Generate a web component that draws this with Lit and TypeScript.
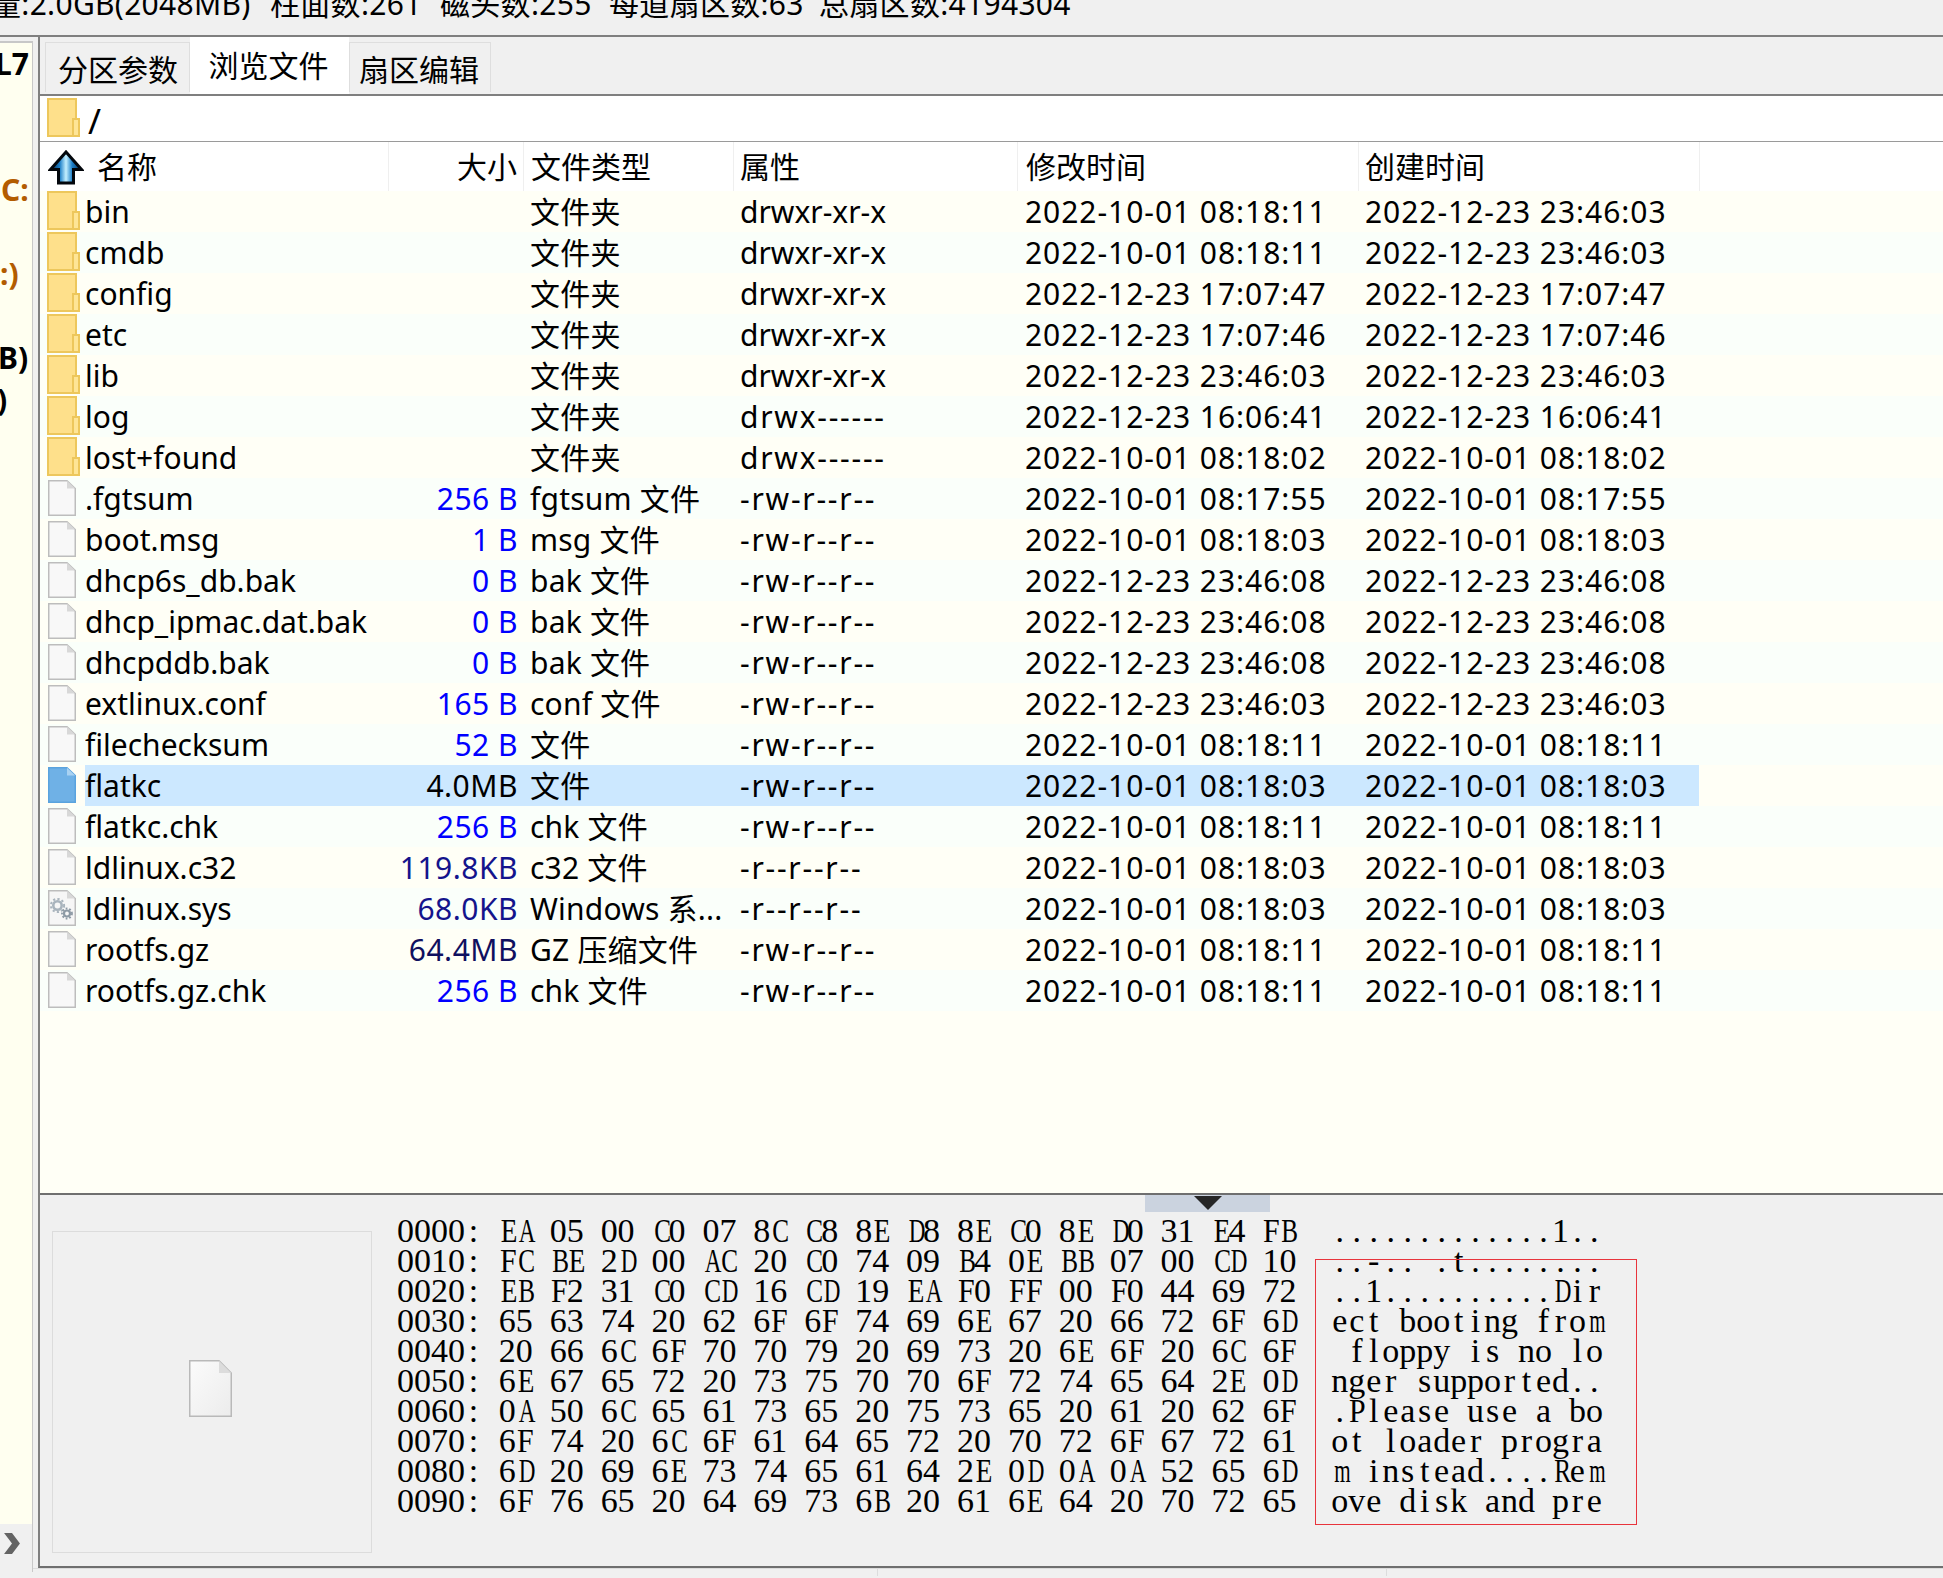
import { LitElement, html, css, svg } from "lit";
import { customElement } from "lit/decorators.js";

type Row = [string, string, string, string, string, string];
const ROWS: Row[] = [
  ["bin", "", "文件夹", "drwxr-xr-x", "2022-10-01 08:18:11", "2022-12-23 23:46:03"],
  ["cmdb", "", "文件夹", "drwxr-xr-x", "2022-10-01 08:18:11", "2022-12-23 23:46:03"],
  ["config", "", "文件夹", "drwxr-xr-x", "2022-12-23 17:07:47", "2022-12-23 17:07:47"],
  ["etc", "", "文件夹", "drwxr-xr-x", "2022-12-23 17:07:46", "2022-12-23 17:07:46"],
  ["lib", "", "文件夹", "drwxr-xr-x", "2022-12-23 23:46:03", "2022-12-23 23:46:03"],
  ["log", "", "文件夹", "drwx------", "2022-12-23 16:06:41", "2022-12-23 16:06:41"],
  ["lost+found", "", "文件夹", "drwx------", "2022-10-01 08:18:02", "2022-10-01 08:18:02"],
  [".fgtsum", "256 B", "fgtsum 文件", "-rw-r--r--", "2022-10-01 08:17:55", "2022-10-01 08:17:55"],
  ["boot.msg", "1 B", "msg 文件", "-rw-r--r--", "2022-10-01 08:18:03", "2022-10-01 08:18:03"],
  ["dhcp6s_db.bak", "0 B", "bak 文件", "-rw-r--r--", "2022-12-23 23:46:08", "2022-12-23 23:46:08"],
  ["dhcp_ipmac.dat.bak", "0 B", "bak 文件", "-rw-r--r--", "2022-12-23 23:46:08", "2022-12-23 23:46:08"],
  ["dhcpddb.bak", "0 B", "bak 文件", "-rw-r--r--", "2022-12-23 23:46:08", "2022-12-23 23:46:08"],
  ["extlinux.conf", "165 B", "conf 文件", "-rw-r--r--", "2022-12-23 23:46:03", "2022-12-23 23:46:03"],
  ["filechecksum", "52 B", "文件", "-rw-r--r--", "2022-10-01 08:18:11", "2022-10-01 08:18:11"],
  ["flatkc", "4.0MB", "文件", "-rw-r--r--", "2022-10-01 08:18:03", "2022-10-01 08:18:03"],
  ["flatkc.chk", "256 B", "chk 文件", "-rw-r--r--", "2022-10-01 08:18:11", "2022-10-01 08:18:11"],
  ["ldlinux.c32", "119.8KB", "c32 文件", "-r--r--r--", "2022-10-01 08:18:03", "2022-10-01 08:18:03"],
  ["ldlinux.sys", "68.0KB", "Windows 系...", "-r--r--r--", "2022-10-01 08:18:03", "2022-10-01 08:18:03"],
  ["rootfs.gz", "64.4MB", "GZ 压缩文件", "-rw-r--r--", "2022-10-01 08:18:11", "2022-10-01 08:18:11"],
  ["rootfs.gz.chk", "256 B", "chk 文件", "-rw-r--r--", "2022-10-01 08:18:11", "2022-10-01 08:18:11"],
];

const HEX: [string, string][] = [
  ["0000: EA 05 00 C0 07 8C C8 8E D8 8E C0 8E D0 31 E4 FB", ".............1.."],
  ["0010: FC BE 2D 00 AC 20 C0 74 09 B4 0E BB 07 00 CD 10", "..-.. .t........"],
  ["0020: EB F2 31 C0 CD 16 CD 19 EA F0 FF 00 F0 44 69 72", "..1..........Dir"],
  ["0030: 65 63 74 20 62 6F 6F 74 69 6E 67 20 66 72 6F 6D", "ect booting from"],
  ["0040: 20 66 6C 6F 70 70 79 20 69 73 20 6E 6F 20 6C 6F", " floppy is no lo"],
  ["0050: 6E 67 65 72 20 73 75 70 70 6F 72 74 65 64 2E 0D", "nger supported.."],
  ["0060: 0A 50 6C 65 61 73 65 20 75 73 65 20 61 20 62 6F", ".Please use a bo"],
  ["0070: 6F 74 20 6C 6F 61 64 65 72 20 70 72 6F 67 72 61", "ot loader progra"],
  ["0080: 6D 20 69 6E 73 74 65 61 64 2E 0D 0A 0A 52 65 6D", "m instead....Rem"],
  ["0090: 6F 76 65 20 64 69 73 6B 20 61 6E 64 20 70 72 65", "ove disk and pre"],
];

const folderIcon = svg`<svg class="ic" width="33" height="39" viewBox="0 0 33 39">
  <rect x="1" y="1" width="28" height="37" fill="#fee08b" stroke="#edc75c" stroke-width="2"/>
  <rect x="26" y="21" width="6" height="17" fill="#fee596" stroke="#edc75c" stroke-width="2"/>
</svg>`;

const pageIcon = (fill: string, line: string, ear: string, extra: unknown = null) => svg`<svg class="ic" width="28" height="36" viewBox="0 0 28 36">
  <path d="M.75.75H19L27.25 8.5V35.25H.75Z" fill="${fill}" stroke="${line}" stroke-width="1.5"/>
  <path d="M19 .75V8.5H27.25Z" fill="${ear}"/>
  ${extra}
</svg>`;

const gears = svg`
  <circle cx="9.5" cy="15.5" r="4.2" fill="none" stroke="#a9b4bd" stroke-width="2.6"/>
  <circle cx="9.5" cy="15.5" r="6.6" fill="none" stroke="#a9b4bd" stroke-width="2" stroke-dasharray="2.2 2.2"/>
  <circle cx="19" cy="23.5" r="3" fill="none" stroke="#8d9aa5" stroke-width="2.2"/>
  <circle cx="19" cy="23.5" r="5" fill="none" stroke="#8d9aa5" stroke-width="1.8" stroke-dasharray="1.8 1.8"/>`;

const upIcon = svg`<svg class="up" width="36" height="35" viewBox="0 0 36 35">
  <defs><linearGradient id="u" x1="0" x2="1" y1="0" y2="0">
    <stop offset="0" stop-color="#06294f"/><stop offset=".3" stop-color="#1c7fc8"/><stop offset=".5" stop-color="#c4f0ff"/><stop offset=".7" stop-color="#1c7fc8"/><stop offset="1" stop-color="#06294f"/>
  </linearGradient></defs>
  <path d="M18 2 33.5 19.5H25.5V33H10.5V19.5H2.5Z" fill="url(#u)" stroke="#03070c" stroke-width="3" stroke-linejoin="miter"/>
</svg>`;

function chClass(c: string) {
  if ("AD".includes(c)) return "ch x70";
  if ("BCR".includes(c)) return "ch x75";
  if (c === "E") return "ch x82";
  if ("FP".includes(c)) return "ch x90";
  if (c === "m") return "ch x65";
  return "ch";
}

@customElement("app-root")
export class AppRoot extends LitElement {
  static styles = css`
    :host {
      display: block; width: 1943px; height: 1578px; overflow: hidden; background: #f0f0f0; color: #000;
      font-family: "Noto Sans", "Noto Sans CJK SC", sans-serif; font-size: 30px;
    }
    .info { height: 35px; border-bottom: 2px solid #7f7f7f; overflow: hidden; display: flex; white-space: pre; box-sizing: content-box; }
    .info span { display: block; line-height: 40px; margin-top: -16px; flex: none; letter-spacing: .3px; }
    .info .a { margin-left: -9px; width: 279px; }
    .info .b { width: 170px; }
    .info .c { width: 169px; }
    .info .d { width: 210px; }
    .body { display: flex; height: 1531px; }
    .tree { width: 32px; margin-top: 4px; height: 1529px; background: #fffff0; border-top: 2px solid #c8c8c8; border-right: 1px solid #c8c8c8; display: flex; flex-direction: column; overflow: hidden; flex: none; position: relative; font-weight: 700; }
    .tree div { height: 42px; line-height: 42px; white-space: nowrap; flex: none; }
    .tree .l7 { margin-left: -5px; }
    .tree .cc { margin-left: 1px; color: #b35c00; }
    .tree .sm { margin-left: 0; color: #b35c00; }
    .tree .bb { margin-left: -2px; }
    .tree .pp { margin-left: -3px; }
    .tree .grow { flex: 1; }
    .tree .more { height: 48px; box-sizing: border-box; background: #f0f0f0; display: flex; align-items: center; padding: 0 0 10px 3px; }
    .main { margin-left: 5px; flex: 1; min-width: 0; border-left: 2px solid #7f7f7f; display: flex; flex-direction: column; border-bottom: 2px solid #6f6f6f; }
    .tabs { height: 57px; display: flex; align-items: flex-end; padding-left: 5px; flex: none; background: #f0f0f0; }
    .tab { height: 50px; box-sizing: border-box; border: 1px solid #dedede; border-bottom: none; line-height: 54px; text-align: center; margin-bottom: 2px; flex: none; }
    .t1 { width: 145px; padding-left: 1px; }
    .t3 { width: 142px; padding-right: 2px; }
    .tab.on { width: 159px; height: 57px; background: #fff; border-color: #fff; line-height: 56px; margin-bottom: 0; margin-top: -1px; padding-right: 2px; }
    .path { border-top: 2px solid #7f7f7f; border-bottom: 1px solid #9a9a9a; background: #fff; display: flex; align-items: flex-start; flex: none; padding-top: 2px; box-sizing: content-box; height: 43px; }
    .path .ic { margin-left: 7px; flex: none; }
    .path .slash { margin-left: 8px; line-height: 46px; font-size: 35px; }
    .head { height: 49px; background: #fff; display: flex; flex: none; line-height: 50px; }
    .head > div { box-sizing: border-box; border-right: 1px solid #efefef; height: 49px; white-space: nowrap; flex: none; }
    .up { margin: 8px 0 0 8px; display: block; flex: none; }
    .h0 { width: 349px; display: flex; }
    .h0 span { margin-left: 13px; }
    .h1 { width: 135px; text-align: right; padding-right: 6px; }
    .h2 { width: 210px; padding-left: 7px; }
    .h3 { width: 284px; padding-left: 6px; }
    .h4 { width: 341px; padding-left: 8px; }
    .h5 { width: 341px; padding-left: 6px; }
    .list { flex: 1; min-height: 0; background: #fffff6; overflow: hidden; }
    .row { height: 41px; display: flex; line-height: 41px; white-space: nowrap; background: #fffff6; }
    .row:nth-child(even) { background: #fafffa; }
    .icon { width: 45px; flex: none; box-sizing: border-box; padding-left: 7px; }
    .icon.file { padding: 2px 0 0 8px; }
    .ic { display: block; }
    .cells { width: 1614px; display: flex; flex: none; }
    .row.sel .cells { background: #cce8ff; }
    .c { flex: none; box-sizing: border-box; overflow: hidden; }
    .name { width: 303px; padding-left: 0; }
    .size { width: 135px; text-align: right; padding-right: 5px; letter-spacing: .5px; }
    .size.b { color: #0000ff; }
    .size.k { color: #14148c; }
    .size.m { color: #10105f; }
    .type { width: 210px; padding-left: 7px; letter-spacing: .2px; }
    .attr { width: 284px; padding-left: 7px; }
    .attr.dash { letter-spacing: 1.75px; }
    .tm { width: 341px; padding-left: 8px; letter-spacing: .95px; }
    .tm.last { width: 341px; padding-left: 7px; }
    .hexpane { height: 373px; flex: none; border-top: 2px solid #6f6f6f; position: relative; display: flex; background: #f0f0f0; box-sizing: border-box; }
    .preview { width: 320px; height: 322px; margin: 36px 0 0 12px; padding: 0 3px 8px 0; border: 1px solid #dcdcdc; box-sizing: border-box; display: flex; align-items: center; justify-content: center; flex: none; }
    .dump { margin: 21px 0 0 25px; font-family: "Liberation Serif", "Times New Roman", serif; font-size: 34px; }
    .hl { display: flex; height: 30px; line-height: 30px; }
    .ch { display: block; width: 16.97px; flex: none; text-align: center; white-space: pre; }
    .x70 { transform: scaleX(.68); }
    .x75 { transform: scaleX(.74); }
    .x82 { transform: scaleX(.8); }
    .x90 { transform: scaleX(.88); }
    .x65 { transform: scaleX(.62); }
    .gap { width: 35px; flex: none; }
    .grip { position: absolute; left: 1105px; top: 0; width: 125px; height: 17px; background: #cbd3df; display: flex; justify-content: center; }
    .redbox { position: absolute; left: 1275px; top: 64px; width: 322px; height: 266px; box-sizing: border-box; border: 1.5px solid #e8343c; }
    .status { height: 8px; border-top: 1px solid #dcdcdc; display: flex; flex: none; box-sizing: border-box; }
    .status div { border-right: 1px solid #dcdcdc; flex: none; }
    .status .s1 { width: 877px; }
    .status .s2 { width: 508px; }
  `;

  private line(s: string) {
    return [...s].map((c) => html`<span class=${chClass(c)}>${c}</span>`);
  }

  render() {
    return html`
      <div class="info">
        <span class="a">量:2.0GB(2048MB)</span><span class="b">柱面数:261</span><span class="c">磁头数:255</span><span class="d">每道扇区数:63</span><span>总扇区数:4194304</span>
      </div>
      <div class="body">
        <div class="tree">
          <div class="l7">L7</div><div></div><div></div>
          <div class="cc">C:</div><div></div>
          <div class="sm">:)</div><div></div>
          <div class="bb">B)</div>
          <div class="pp">)</div>
          <div class="grow"></div>
          <div class="more">
            <svg width="18" height="21" viewBox="0 0 17 17" preserveAspectRatio="none"><path d="M1 0H8.5L16 8.5L8.5 17H1L8.5 8.5Z" fill="#646464"/></svg>
          </div>
        </div>
        <div class="main">
          <div class="tabs">
            <div class="tab t1">分区参数</div>
            <div class="tab on">浏览文件</div>
            <div class="tab t3">扇区编辑</div>
          </div>
          <div class="path">${folderIcon}<span class="slash">/</span></div>
          <div class="head">
            <div class="h0">${upIcon}<span>名称</span></div>
            <div class="h1">大小</div>
            <div class="h2">文件类型</div>
            <div class="h3">属性</div>
            <div class="h4">修改时间</div>
            <div class="h5">创建时间</div>
          </div>
          <div class="list">
            ${ROWS.map((r, i) => {
              const isDir = i < 7;
              const sel = r[0] === "flatkc";
              const unit = r[1].endsWith("KB") ? "k" : r[1].endsWith("MB") ? "m" : "b";
              return html`<div class="row ${sel ? "sel" : ""}">
                <div class="icon ${isDir ? "" : "file"}">
                  ${isDir
                    ? folderIcon
                    : sel
                      ? pageIcon("#6fb1e6", "#5aa3de", "#a9d2f2")
                      : r[0] === "ldlinux.sys"
                        ? pageIcon("#f6f6f6", "#bdbdbd", "#d8d8d8", gears)
                        : pageIcon("#f8f8f8", "#bdbdbd", "#d8d8d8")}
                </div>
                <div class="cells">
                  <div class="c name">${r[0]}</div>
                  <div class="c size ${sel ? "" : unit}">${r[1]}</div>
                  <div class="c type">${r[2]}</div>
                  <div class="c attr ${r[3].startsWith("drwxr") ? "" : "dash"}">${r[3]}</div>
                  <div class="c tm">${r[4]}</div>
                  <div class="c tm last">${r[5]}</div>
                </div>
              </div>`;
            })}
          </div>
          <div class="hexpane">
            <div class="preview">
              <svg width="43" height="57" viewBox="0 0 43 57">
                <defs><linearGradient id="p" x1="0" y1="0" x2="1" y2="1"><stop offset="0" stop-color="#fbfbfb"/><stop offset="1" stop-color="#ececec"/></linearGradient></defs>
                <path d="M.75.75H30L42.25 13V56.25H.75Z" fill="url(#p)" stroke="#b9b9b9" stroke-width="1.5"/>
                <path d="M30 .75V13H42.25Z" fill="#dcdcdc"/>
              </svg>
            </div>
            <div class="dump">
              ${HEX.map(([h, a]) => html`<div class="hl">${this.line(h)}<span class="gap"></span>${this.line(a)}</div>`)}
            </div>
            <div class="grip">
              <svg width="30" height="15" viewBox="0 0 30 15"><path d="M1 1H29L15 15Z" fill="#262626"/></svg>
            </div>
            <div class="redbox"></div>
          </div>
        </div>
      </div>
      <div class="status"><div class="s1"></div><div class="s2"></div></div>
    `;
  }
}
